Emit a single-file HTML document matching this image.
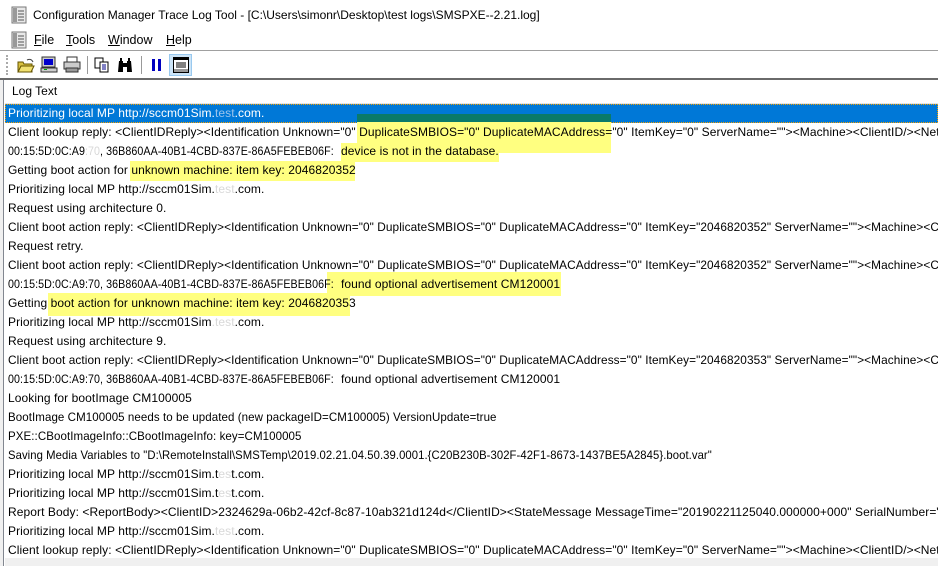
<!DOCTYPE html>
<html><head><meta charset="utf-8"><style>
*{margin:0;padding:0;box-sizing:border-box}
body{width:938px;height:566px;overflow:hidden;background:#fff;font-family:"Liberation Sans",sans-serif;font-size:12px;color:#000;position:relative}
.abs{position:absolute}
.title{left:33px;top:8px;font-size:12px}
.menu span{position:absolute;top:33px;font-size:12.5px}
.menu u{text-decoration:underline}
.row{position:absolute;left:8px;height:19px;line-height:19px;white-space:nowrap;width:930px;overflow:hidden;letter-spacing:0.08px}
.s{display:inline-block;transform-origin:0 50%}
.hl{position:absolute;background:#ffff80}
.bl{color:#d8d8d8}
</style></head><body>
<svg class="abs" style="left:11px;top:6px" width="16" height="18"><rect x="1" y="1" width="14" height="16" fill="#e8e8e8" stroke="#777"/><rect x="2" y="2" width="4" height="14" fill="#999"/><line x1="7" y1="5" x2="13" y2="5" stroke="#555"/><line x1="7" y1="8" x2="13" y2="8" stroke="#555"/><line x1="7" y1="11" x2="13" y2="11" stroke="#555"/><line x1="7" y1="14" x2="13" y2="14" stroke="#555"/></svg>
<div class="abs title">Configuration Manager Trace Log Tool - [C:\Users\simonr\Desktop\test logs\SMSPXE--2.21.log]</div>
<svg class="abs" style="left:11px;top:31px" width="16" height="18"><rect x="1" y="1" width="14" height="16" fill="#e8e8e8" stroke="#777"/><rect x="2" y="2" width="4" height="14" fill="#999"/><line x1="7" y1="5" x2="13" y2="5" stroke="#555"/><line x1="7" y1="8" x2="13" y2="8" stroke="#555"/><line x1="7" y1="11" x2="13" y2="11" stroke="#555"/><line x1="7" y1="14" x2="13" y2="14" stroke="#555"/></svg>
<div class="menu"><span style="left:34px"><u>F</u>ile</span><span style="left:66px"><u>T</u>ools</span><span style="left:108px"><u>W</u>indow</span><span style="left:166px"><u>H</u>elp</span></div>
<div class="abs" style="left:0;top:50px;width:938px;height:1px;background:#a0a0a0"></div>
<div class="abs" style="left:6px;top:55px;width:2px;height:20px;border-left:2px dotted #aaa"></div>
<svg class="abs" style="left:17px;top:57px" width="18" height="16"><path d="M1 5h5l1 2h8v8H1z" fill="#d8c040" stroke="#665500"/><path d="M1 15l3-6h13l-3 6z" fill="#f0e070" stroke="#665500"/><path d="M10 3q4-2 6 2" stroke="#444" fill="none"/></svg>
<svg class="abs" style="left:40px;top:56px" width="18" height="18"><rect x="2" y="1" width="13" height="10" fill="#ccc" stroke="#333"/><rect x="4" y="3" width="9" height="6" fill="#0000cc"/><rect x="1" y="12" width="16" height="4" fill="#ccc" stroke="#333"/><rect x="4" y="13" width="3" height="1" fill="#0a0"/></svg>
<svg class="abs" style="left:63px;top:56px" width="18" height="18"><rect x="4" y="1" width="10" height="5" fill="#fff" stroke="#333"/><rect x="1" y="6" width="16" height="7" fill="#ccc" stroke="#333"/><rect x="3" y="12" width="12" height="4" fill="#999" stroke="#333"/></svg>
<div class="abs" style="left:87px;top:56px;width:1px;height:18px;background:#999"></div>
<svg class="abs" style="left:94px;top:57px" width="16" height="16"><rect x="1" y="1" width="8" height="10" fill="#fff" stroke="#000"/><rect x="6" y="5" width="8" height="10" fill="#fff" stroke="#000"/><line x1="8" y1="8" x2="12" y2="8" stroke="#008"/><line x1="8" y1="10" x2="12" y2="10" stroke="#008"/><line x1="8" y1="12" x2="12" y2="12" stroke="#008"/></svg>
<svg class="abs" style="left:117px;top:57px" width="16" height="16"><path d="M2 4h4v11H1zM10 4h4l1 11h-5z" fill="#000"/><rect x="6" y="6" width="4" height="4" fill="#000"/><rect x="3" y="1" width="2" height="3" fill="#000"/><rect x="11" y="1" width="2" height="3" fill="#000"/></svg>
<div class="abs" style="left:141px;top:56px;width:1px;height:18px;background:#999"></div>
<div class="abs" style="left:152px;top:59px;width:3px;height:12px;background:#0000c0"></div>
<div class="abs" style="left:158px;top:59px;width:3px;height:12px;background:#0000c0"></div>
<div class="abs" style="left:169px;top:54px;width:23px;height:22px;background:#cce4f7;border:1px solid #99c9ef"></div>
<svg class="abs" style="left:173px;top:57px" width="16" height="16"><rect x="0.5" y="0.5" width="15" height="15" fill="#fff" stroke="#000"/><rect x="1" y="1" width="14" height="2" fill="#000"/><line x1="3" y1="6" x2="13" y2="6" stroke="#000"/><line x1="3" y1="8" x2="13" y2="8" stroke="#000"/><line x1="3" y1="10" x2="13" y2="10" stroke="#000"/><rect x="1" y="12" width="14" height="3" fill="#999"/></svg>
<div class="abs" style="left:0;top:78px;width:938px;height:2px;background:#6a6a6a"></div>
<div class="abs" style="left:0;top:80px;width:4px;height:486px;background:#f0f0f0;border-right:1px solid #828790"></div>
<div class="abs" style="left:12px;top:84px;font-size:12px">Log Text</div>
<div class="abs" style="left:5px;top:103px;width:933px;height:1px;background:#e5e5e5"></div>
<div class="abs" style="left:5px;top:104px;width:933px;height:19px;background:#0078d7;border:1px dotted #f5a000"></div>
<div class="hl" style="left:357px;top:114px;width:254px;height:39px"></div>
<div class="abs" style="left:357px;top:114px;width:254px;height:8px;background:#0a7a6a"></div>
<div class="hl" style="left:341px;top:143px;width:158px;height:19px"></div>
<div class="hl" style="left:130px;top:161px;width:225px;height:20px"></div>
<div class="hl" style="left:327px;top:272px;width:234px;height:24px"></div>
<div class="hl" style="left:48px;top:293px;width:302px;height:23px"></div>
<div class="abs" style="left:5px;top:558px;width:933px;height:8px;background:#f0f0f0"></div>
<div class="row" style="top:104px;color:#fff">Prioritizing local MP http://sccm01Sim.<span style="color:#9cc4ec">test</span>.com.</div>
<div class="row" style="top:123px">Client lookup reply: &lt;ClientIDReply&gt;&lt;Identification Unknown="0" DuplicateSMBIOS="0" DuplicateMACAddress="0" ItemKey="0" ServerName=""&gt;&lt;Machine&gt;&lt;ClientID/&gt;&lt;NetbiosName/&gt;</div>
<div class="row" style="top:142px"><span style="display:inline-block;width:333px"><span class="s" style="transform:scaleX(0.89)">00:15:5D:0C:A9<span class="bl">:70</span>, 36B860AA-40B1-4CBD-837E-86A5FEBEB06F:</span></span>device is not in the database.</div>
<div class="row" style="top:161px">Getting boot action for unknown machine: item key: 2046820352</div>
<div class="row" style="top:180px">Prioritizing local MP http://sccm01Sim.<span class="bl">test</span>.com.</div>
<div class="row" style="top:199px">Request using architecture 0.</div>
<div class="row" style="top:218px"><span class="s" style="transform:scaleX(0.985)">Client boot action reply: &lt;ClientIDReply&gt;&lt;Identification Unknown="0" DuplicateSMBIOS="0" DuplicateMACAddress="0" ItemKey="2046820352" ServerName=""&gt;&lt;Machine&gt;&lt;ClientID/&gt;</span></div>
<div class="row" style="top:237px">Request retry.</div>
<div class="row" style="top:256px"><span class="s" style="transform:scaleX(0.985)">Client boot action reply: &lt;ClientIDReply&gt;&lt;Identification Unknown="0" DuplicateSMBIOS="0" DuplicateMACAddress="0" ItemKey="2046820352" ServerName=""&gt;&lt;Machine&gt;&lt;ClientID/&gt;</span></div>
<div class="row" style="top:275px"><span style="display:inline-block;width:333px"><span class="s" style="transform:scaleX(0.89)">00:15:5D:0C:A9:70, 36B860AA-40B1-4CBD-837E-86A5FEBEB06F:</span></span>found optional advertisement CM120001</div>
<div class="row" style="top:294px">Getting boot action for unknown machine: item key: 2046820353</div>
<div class="row" style="top:313px">Prioritizing local MP http://sccm01Sim<span class="bl">.test</span>.com.</div>
<div class="row" style="top:332px">Request using architecture 9.</div>
<div class="row" style="top:351px"><span class="s" style="transform:scaleX(0.985)">Client boot action reply: &lt;ClientIDReply&gt;&lt;Identification Unknown="0" DuplicateSMBIOS="0" DuplicateMACAddress="0" ItemKey="2046820353" ServerName=""&gt;&lt;Machine&gt;&lt;ClientID/&gt;</span></div>
<div class="row" style="top:370px"><span style="display:inline-block;width:333px"><span class="s" style="transform:scaleX(0.89)">00:15:5D:0C:A9:70, 36B860AA-40B1-4CBD-837E-86A5FEBEB06F:</span></span>found optional advertisement CM120001</div>
<div class="row" style="top:389px">Looking for bootImage CM100005</div>
<div class="row" style="top:408px"><span class="s" style="transform:scaleX(0.96)">BootImage CM100005 needs to be updated (new packageID=CM100005) VersionUpdate=true</span></div>
<div class="row" style="top:427px"><span class="s" style="transform:scaleX(0.96)">PXE::CBootImageInfo::CBootImageInfo: key=CM100005</span></div>
<div class="row" style="top:446px"><span class="s" style="transform:scaleX(0.94)">Saving Media Variables to "D:\RemoteInstall\SMSTemp\2019.02.21.04.50.39.0001.{C20B230B-302F-42F1-8673-1437BE5A2845}.boot.var"</span></div>
<div class="row" style="top:465px">Prioritizing local MP http://sccm01Sim.t<span class="bl">es</span>t.com.</div>
<div class="row" style="top:484px">Prioritizing local MP http://sccm01Sim.t<span class="bl">es</span>t.com.</div>
<div class="row" style="top:503px">Report Body: &lt;ReportBody&gt;&lt;ClientID&gt;2324629a-06b2-42cf-8c87-10ab321d124d&lt;/ClientID&gt;&lt;StateMessage MessageTime="20190221125040.000000+000" SerialNumber="1"&gt;&lt;Topic</div>
<div class="row" style="top:522px">Prioritizing local MP http://sccm01Sim.<span class="bl">test</span>.com.</div>
<div class="row" style="top:541px">Client lookup reply: &lt;ClientIDReply&gt;&lt;Identification Unknown="0" DuplicateSMBIOS="0" DuplicateMACAddress="0" ItemKey="0" ServerName=""&gt;&lt;Machine&gt;&lt;ClientID/&gt;&lt;NetbiosName/&gt;</div>
</body></html>
